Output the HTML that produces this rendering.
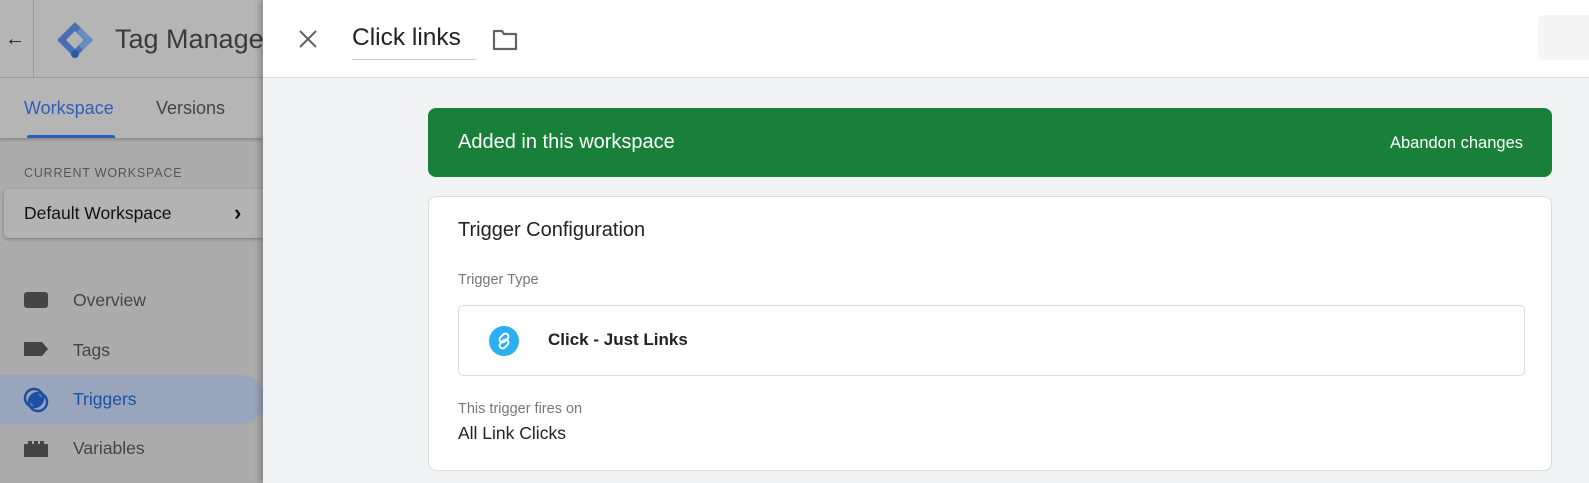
<!DOCTYPE html>
<html><head><meta charset="utf-8"><style>
*{box-sizing:border-box;margin:0;padding:0}
body{width:1589px;height:483px;overflow:hidden;font-family:"Liberation Sans",Arial,sans-serif;background:#f1f3f4;position:relative}
.side{position:absolute;left:0;top:0;width:263px;height:483px;background:#acacac}
.shead{position:absolute;left:0;top:0;width:263px;height:78px;background:#b5b5b5;border-bottom:1px solid #9e9e9e}
.tabs{position:absolute;left:0;top:78px;width:263px;height:60px;background:#b5b5b5;box-shadow:0 2px 3px rgba(0,0,0,.2)}
.abs{position:absolute}
.main{position:absolute;left:263px;top:0;right:0;bottom:0;background:#f1f3f4;box-shadow:-3px 0 6px rgba(0,0,0,.25)}
.top{position:absolute;left:0;top:0;right:0;height:78px;background:#fff;border-bottom:1px solid #dadce0}
.card{position:absolute;left:165px;width:1124px;background:#fff;border:1px solid #dadce0;border-radius:8px}
</style></head><body>
<div class="side">
 <div class="shead">
  <div class="abs" style="left:5px;top:28px;font-size:20px;color:#222">←</div>
  <div class="abs" style="left:33px;top:0;width:1px;height:78px;background:#9a9a9a"></div>
  <svg class="abs" style="left:55px;top:20px" width="40" height="40" viewBox="0 0 40 40"><path d="M20 2 L38 20 L20 38 L2 20Z" fill="#4a6fb0"/><path d="M20 11 L29 20 L20 29 L11 20Z" fill="#b5b5b5"/><path d="M26 8 L38 20 L28 30 L24 26 L30 20 L22 12Z" fill="#6a8cc4"/><circle cx="20" cy="34" r="4" fill="#2d58a8"/></svg>
  <div class="abs" style="left:115px;top:24px;font-size:27px;color:#3a3a3a;white-space:nowrap">Tag Manager</div>
 </div>
 <div class="tabs">
  <div class="abs" style="left:24px;top:20px;font-size:18px;color:#2e5fb8">Workspace</div>
  <div class="abs" style="left:156px;top:20px;font-size:18px;color:#444">Versions</div>
  <div class="abs" style="left:27px;top:57px;width:88px;height:3px;background:#2e5fb8;border-radius:2px 2px 0 0"></div>
 </div>
 <div class="abs" style="left:24px;top:166px;font-size:12.5px;letter-spacing:.8px;color:#555">CURRENT WORKSPACE</div>
 <div class="abs" style="left:4px;top:189px;width:259px;height:49px;background:#b3b3b3;border-radius:4px 0 0 4px;box-shadow:0 1px 3px rgba(0,0,0,.3)">
  <div class="abs" style="left:20px;top:14px;font-size:17.5px;color:#111">Default Workspace</div>
  <div class="abs" style="left:230px;top:11px;font-size:22px;color:#111;font-weight:bold">›</div>
 </div>
 <div class="abs" style="left:24px;top:292px;width:24px;height:16px;background:#444;border-radius:3px"></div>
 <div class="abs" style="left:73px;top:290px;font-size:17.5px;color:#444">Overview</div>
 <svg class="abs" style="left:24px;top:342px" width="24" height="14"><path d="M0 0H18L24 7L18 14H0Z" fill="#444"/></svg>
 <div class="abs" style="left:73px;top:340px;font-size:17.5px;color:#444">Tags</div>
 <div class="abs" style="left:0;top:375px;width:265px;height:49px;background:#98a5bc;border-radius:0 25px 25px 0"></div>
 <svg class="abs" style="left:23px;top:387px" width="26" height="26"><circle cx="11" cy="11" r="9" fill="none" stroke="#1d4ea3" stroke-width="2.5"/><circle cx="15" cy="15" r="9" fill="none" stroke="#1d4ea3" stroke-width="2.5"/><circle cx="13" cy="13" r="6" fill="#1d4ea3"/></svg>
 <div class="abs" style="left:73px;top:389px;font-size:17.5px;color:#1d4ea3">Triggers</div>
 <svg class="abs" style="left:24px;top:441px" width="24" height="16"><path d="M0 3H4V0H8V3H10V0H14V3H16V0H20V3H24V16H0Z" fill="#444"/></svg>
 <div class="abs" style="left:73px;top:438px;font-size:17.5px;color:#444">Variables</div>
</div>
<div class="main">
 <div class="top">
  <svg class="abs" style="left:35px;top:29px" width="20" height="20"><path d="M2 2L18 18M18 2L2 18" stroke="#5f6368" stroke-width="2"/></svg>
  <div class="abs" style="left:89px;top:24px;font-size:24.5px;color:#222">Click links</div>
  <div class="abs" style="left:89px;top:59px;width:124px;height:1px;background:#ccc"></div>
  <svg class="abs" style="left:229px;top:29px" width="26" height="22"><path d="M2 2H10L12 5H24V20H2Z" fill="none" stroke="#5f6368" stroke-width="2.2" stroke-linejoin="round"/></svg>
  <div class="abs" style="left:1275px;top:15px;width:60px;height:45px;background:#f5f5f5;border-radius:5px"></div>
 </div>
 <div class="card" style="top:108px;height:69px;background:#188038;border-color:#188038">
  <div class="abs" style="left:29px;top:22px;font-size:20px;color:#fff">Added in this workspace</div>
  <div class="abs" style="right:28px;top:25px;font-size:16.5px;color:#fff">Abandon changes</div>
 </div>
 <div class="card" style="top:196px;height:275px">
  <div class="abs" style="left:29px;top:22px;font-size:20px;color:#222">Trigger Configuration</div>
  <div class="abs" style="left:29px;top:75px;font-size:14.5px;color:#777">Trigger Type</div>
  <div class="abs" style="left:29px;top:108px;width:1067px;height:71px;border:1px solid #dadce0;border-radius:5px">
   <svg class="abs" style="left:30px;top:20px" width="30" height="30"><circle cx="15" cy="15" r="15" fill="#2ab0f0"/><g fill="none" stroke="#fff" stroke-width="2"><rect x="12" y="7" width="6" height="10" rx="3" transform="rotate(45 15 12)"/><rect x="12" y="13" width="6" height="10" rx="3" transform="rotate(45 15 18)"/></g></svg>
   <div class="abs" style="left:89px;top:24px;font-size:17px;font-weight:bold;color:#222">Click - Just Links</div>
  </div>
  <div class="abs" style="left:29px;top:204px;font-size:14.5px;color:#777">This trigger fires on</div>
  <div class="abs" style="left:29px;top:226px;font-size:17.5px;color:#222">All Link Clicks</div>
 </div>
</div>
</body></html>
